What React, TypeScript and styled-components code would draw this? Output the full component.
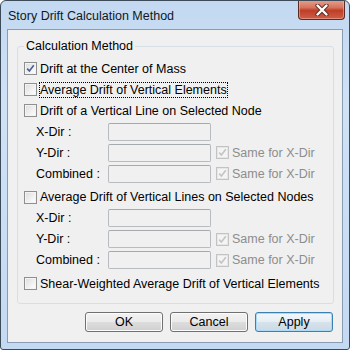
import React from "react";
import styled, { createGlobalStyle } from "styled-components";

const GlobalStyle = createGlobalStyle`
  html, body {
    margin: 0;
    padding: 0;
    background: #ffffff;
  }
  body {
    font-family: "Liberation Sans", Arial, sans-serif;
    font-size: 12.5px;
    color: #000;
  }
`;

const Window = styled.div`
  width: 350px;
  height: 350px;
  box-sizing: border-box;
  border: 1px solid #3d4a58;
  border-radius: 6px 6px 3px 3px;
  background: linear-gradient(180deg, #c3d9f1 0%, #cfe2f6 30%, #c4daf2 100%);
  display: flex;
  flex-direction: column;
  padding: 0 6px 6px 6px;
  overflow: hidden;
`;

const TitleBar = styled.div`
  height: 28px;
  display: flex;
  align-items: flex-start;
  justify-content: space-between;
`;

const Title = styled.div`
  font-size: 12.5px;
  line-height: 14px;
  margin-top: 8px;
  margin-left: 1px;
  color: #0f1824;
`;

const CloseButton = styled.div`
  width: 47px;
  height: 20px;
  margin-top: -1px;
  margin-right: -2px;
  box-sizing: border-box;
  border: 1px solid #5b2a22;
  border-top: none;
  border-radius: 0 0 4px 4px;
  background: linear-gradient(180deg, #e6a290 0%, #d6725c 40%, #bf3e28 55%, #cc5f46 100%);
  box-shadow: inset 0 0 0 1px rgba(255, 200, 190, 0.45);
  display: flex;
  align-items: center;
  justify-content: center;
`;

const Client = styled.div`
  flex: 1;
  border: 1px solid #8a9cb2;
  background: #f0f0f0;
  padding: 8px 8px 10px 9px;
  display: flex;
  flex-direction: column;
`;

const GroupBox = styled.fieldset`
  margin: 0;
  border: 1px solid #d5dfe5;
  border-radius: 3px;
  padding: 4px 8px 9px 6px;
  min-width: 0;
`;

const Legend = styled.legend`
  font-size: 12.5px;
  line-height: 16px;
  padding: 0 2px;
  margin-left: 0;
`;

const Row = styled.div<{ $gapTop?: boolean }>`
  height: 21px;
  display: flex;
  align-items: center;
  margin-top: ${({ $gapTop }) => ($gapTop ? "2.5px" : "0")};
`;

const Box = styled.span<{ $disabled?: boolean }>`
  width: 13px;
  height: 13px;
  box-sizing: border-box;
  border: 1px solid ${({ $disabled }) => ($disabled ? "#c3c3c3" : "#8e8f8f")};
  background: ${({ $disabled }) =>
    $disabled ? "#f4f4f4" : "linear-gradient(135deg, #dcdcdc 0%, #f2f2f2 60%, #ffffff 100%)"};
  box-shadow: inset 0 0 0 1px ${({ $disabled }) => ($disabled ? "#e6e6e6" : "#f4f4f4")};
  display: flex;
  align-items: center;
  justify-content: center;
  flex-shrink: 0;
`;

const CheckText = styled.span<{ $disabled?: boolean; $focus?: boolean }>`
  margin-left: 3px;
  font-size: 12.5px;
  line-height: 14px;
  color: ${({ $disabled }) => ($disabled ? "#8d8d8d" : "#000")};
  outline: ${({ $focus }) => ($focus ? "1px dotted #000" : "none")};
  outline-offset: 0;
  white-space: nowrap;
`;

const SubRow = styled(Row)`
  padding-left: 12px;
`;

const FieldLabel = styled.span`
  width: 72px;
  flex-shrink: 0;
  font-size: 12.5px;
`;

const TextInput = styled.div`
  width: 103px;
  height: 18px;
  box-sizing: border-box;
  border: 1px solid #b8bbbf;
  border-top-color: #a6a9ad;
  border-radius: 2px;
  background: #f0f0f0;
  flex-shrink: 0;
`;

const SameFor = styled.div`
  display: flex;
  align-items: center;
  margin-left: 5px;
`;

const ButtonRow = styled.div`
  display: flex;
  justify-content: flex-end;
  gap: 7px;
  margin-top: 8px;
  padding-right: 1px;
`;

const Button = styled.button<{ $default?: boolean }>`
  width: 78px;
  height: 20px;
  box-sizing: border-box;
  font-family: "Liberation Sans", Arial, sans-serif;
  font-size: 12.5px;
  color: #000;
  padding: 0;
  border: 1px solid ${({ $default }) => ($default ? "#3c7fb1" : "#707070")};
  border-radius: 3px;
  background: ${({ $default }) =>
    $default
      ? "linear-gradient(180deg, #f2f7fb 0%, #e6eef5 48%, #d6e2ec 52%, #ccdae6 100%)"
      : "linear-gradient(180deg, #f2f2f2 0%, #ebebeb 48%, #dddddd 52%, #cfcfcf 100%)"};
  box-shadow: inset 0 0 0 1px
    ${({ $default }) => ($default ? "#a9dbf6" : "#fcfcfc")};
`;

const Check = ({ disabled }: { disabled?: boolean }) => (
  <svg width="9" height="9" viewBox="0 0 9 9">
    <path
      d="M1.2 4.6 L3.4 7 L7.8 1.2"
      fill="none"
      stroke={disabled ? "#c4c4c4" : "#4a5f97"}
      strokeWidth="1.6"
    />
  </svg>
);

const CheckBox = ({
  label,
  checked,
  disabled,
  focus,
}: {
  label: string;
  checked?: boolean;
  disabled?: boolean;
  focus?: boolean;
}) => (
  <>
    <Box $disabled={disabled}>{checked && <Check disabled={disabled} />}</Box>
    <CheckText $disabled={disabled} $focus={focus}>
      {label}
    </CheckText>
  </>
);

const DirFields = () => (
  <>
    <SubRow>
      <FieldLabel>X-Dir :</FieldLabel>
      <TextInput />
    </SubRow>
    <SubRow>
      <FieldLabel>Y-Dir :</FieldLabel>
      <TextInput />
      <SameFor>
        <CheckBox label="Same for X-Dir" checked disabled />
      </SameFor>
    </SubRow>
    <SubRow>
      <FieldLabel>Combined :</FieldLabel>
      <TextInput />
      <SameFor>
        <CheckBox label="Same for X-Dir" checked disabled />
      </SameFor>
    </SubRow>
  </>
);

const App: React.FC = () => (
  <>
    <GlobalStyle />
    <Window>
      <TitleBar>
        <Title>Story Drift Calculation Method</Title>
        <CloseButton>
          <svg width="14" height="12" viewBox="0 0 14 12">
            <path
              d="M2.5 1.5 L11.5 10.5 M11.5 1.5 L2.5 10.5"
              stroke="#5a2c24"
              strokeWidth="4.2"
              strokeLinecap="round"
            />
            <path
              d="M2.5 1.5 L11.5 10.5 M11.5 1.5 L2.5 10.5"
              stroke="#ffffff"
              strokeWidth="2.4"
              strokeLinecap="round"
            />
          </svg>
        </CloseButton>
      </TitleBar>
      <Client>
        <GroupBox>
          <Legend>Calculation Method</Legend>
          <Row>
            <CheckBox label="Drift at the Center of Mass" checked />
          </Row>
          <Row>
            <CheckBox label="Average Drift of Vertical Elements" focus />
          </Row>
          <Row>
            <CheckBox label="Drift of a Vertical Line on Selected Node" />
          </Row>
          <DirFields />
          <Row $gapTop>
            <CheckBox label="Average Drift of Vertical Lines on Selected Nodes" />
          </Row>
          <DirFields />
          <Row $gapTop>
            <CheckBox label="Shear-Weighted Average Drift of Vertical Elements" />
          </Row>
        </GroupBox>
        <ButtonRow>
          <Button>OK</Button>
          <Button>Cancel</Button>
          <Button $default>Apply</Button>
        </ButtonRow>
      </Client>
    </Window>
  </>
);

export default App;
